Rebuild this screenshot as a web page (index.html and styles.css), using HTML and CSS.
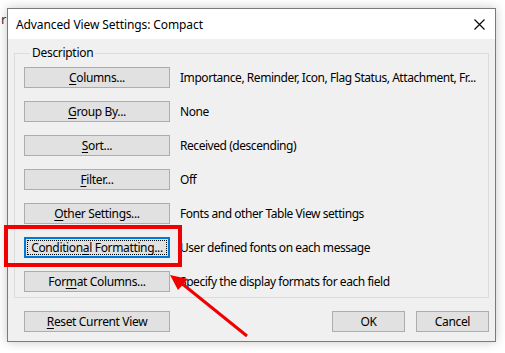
FILE: index.html
```html
<!DOCTYPE html>
<html lang="en">
<head>
    <meta name="viewport" content="width=device-width, initial-scale=1">
    <link rel="stylesheet" href="styles.css">
</head>

<body>
    <!-- window behind the dialog -->
    <div class="behind">r</div>

    <div class="dialog">
        <div class="titlebar">
            <span class="title">Advanced View Settings: Compact</span>
            <svg class="close" width="11" height="11" viewBox="0 0 11 11">
                <path d="M0.5 0.5 L10.5 10.5 M10.5 0.5 L0.5 10.5" stroke="#000" stroke-width="1.1" fill="none"/>
            </svg>
        </div>

        <div class="content">
            <fieldset class="group">
                <legend>Description</legend>

                <div class="row">
                    <button type="button" class="btn"><u>C</u>olumns...</button>
                    <span class="desc">Importance, Reminder, Icon, Flag Status, Attachment, Fr...</span>
                </div>
                <div class="row">
                    <button type="button" class="btn"><u>G</u>roup By...</button>
                    <span class="desc">None</span>
                </div>
                <div class="row">
                    <button type="button" class="btn"><u>S</u>ort...</button>
                    <span class="desc">Received (descending)</span>
                </div>
                <div class="row">
                    <button type="button" class="btn"><u>F</u>ilter...</button>
                    <span class="desc">Off</span>
                </div>
                <div class="row">
                    <button type="button" class="btn"><u>O</u>ther Settings...</button>
                    <span class="desc">Fonts and other Table View settings</span>
                </div>
                <div class="row">
                    <button type="button" class="btn focused"><span class="focus-rect">Condition<u>a</u>l Formatting...</span></button>
                    <span class="desc">User defined fonts on each message</span>
                </div>
                <div class="row">
                    <button type="button" class="btn">For<u>m</u>at Columns...</button>
                    <span class="desc">Specify the display formats for each field</span>
                </div>
            </fieldset>

            <div class="footer">
                <button type="button" class="btn"><u>R</u>eset Current View</button>
                <div class="actions">
                    <button type="button" class="btn small">OK</button>
                    <button type="button" class="btn small">Cancel</button>
                </div>
            </div>
        </div>
    </div>

    <!-- annotation drawn over the screenshot -->
    <div class="highlight"></div>
    <svg class="arrow" width="505" height="353" viewBox="0 0 505 353">
        <line x1="247" y1="336" x2="180" y2="282" stroke="#f00000" stroke-width="3"/>
        <polygon points="170,275 188,279 178,290" fill="#f00000"/>
    </svg>
</body>
</html>
```

FILE: styles.css
```css
body {
    margin: 0;
    background-color: #ffffff;
    font-family: "Noto Sans", "Open Sans", sans-serif;
    font-size: 12px;
    color: #000;
    position: relative;
    width: 505px;
    height: 353px;
    overflow: hidden;
}

.behind {
    position: absolute;
    left: 1px;
    top: 10px;
    font-size: 13px;
    color: #333;
}

.dialog {
    position: relative;
    margin: 8px 0 0 7px;
    width: 487px;
    height: 332px;
    border: 1px solid #7a7a7a;
    background-color: #f0f0f0;
    box-shadow: 0 0 10px rgba(0, 0, 0, 0.22);
    display: flex;
    flex-direction: column;
}

.titlebar {
    height: 30px;
    background-color: #fff;
    display: flex;
    align-items: center;
    justify-content: space-between;
    padding: 0 10px 0 8px;
}

.title {
    font-size: 12px;
    letter-spacing: -0.1px;
    margin-top: 1px;
}

.close {
    display: block;
    margin-top: 1px;
}

.content {
    flex: 1;
    padding: 0 6px 0 6px;
}

.group {
    margin: 6px 0 0 0;
    padding: 6px 0 5px 9px;
    border: 1px solid #dcdcdc;
    display: flex;
    flex-direction: column;
    gap: 13px;
}

    .group legend {
        margin-left: 6px;
        padding: 0 2px;
        font-size: 12px;
        letter-spacing: -0.3px;
        line-height: 16px;
    }

.row {
    display: flex;
    align-items: center;
    gap: 10px;
    height: 21px;
}

.btn {
    width: 146px;
    height: 21px;
    padding: 0;
    margin: 0;
    background-color: #e1e1e1;
    border: 1px solid #adadad;
    font-family: "Noto Sans", "Open Sans", sans-serif;
    font-size: 12px;
    letter-spacing: -0.35px;
    white-space: nowrap;
    color: #000;
    line-height: 17px;
    text-align: center;
}

.btn u {
    text-underline-offset: 2px;
}

.btn.focused {
    border: 2px solid #0078d7;
    padding: 1px;
}

.focus-rect {
    display: block;
    height: 13px;
    line-height: 13px;
    border: 1px dotted #000;
}

.btn.small {
    width: 73px;
}

.desc {
    white-space: nowrap;
    letter-spacing: -0.45px;
}

.footer {
    display: flex;
    justify-content: space-between;
    margin-top: 13px;
    padding-left: 10px;
}

.actions {
    display: flex;
    gap: 11px;
}

.highlight {
    position: absolute;
    left: 4px;
    top: 225px;
    width: 170px;
    height: 34px;
    border: 4px solid #f00000;
}

.arrow {
    position: absolute;
    left: 0;
    top: 0;
}
```
